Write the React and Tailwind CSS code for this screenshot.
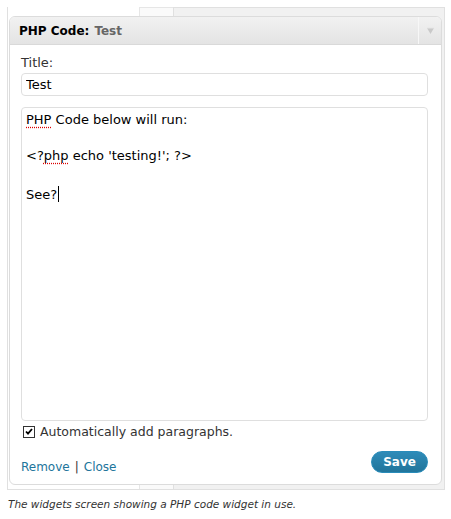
import React, { useState } from "react";

function PhpCodeWidget() {
  const [title, setTitle] = useState("Test");
  const [autoP, setAutoP] = useState(true);

  return (
    <div className="col-start-1 row-start-1 mt-[9px] ml-[2px] mr-[3px] mb-[5px] flex flex-col rounded-[6px] border border-[#dcdcdc] bg-white overflow-hidden">
      {/* header */}
      <div className="flex h-[28px] shrink-0 items-stretch border-b border-[#d9d9d9] bg-gradient-to-b from-[#f1f1f1] to-[#e4e4e4]">
        <div className="flex flex-1 items-center pl-[9px] text-[12px] font-bold text-black">
          PHP Code:
          <span className="ml-[5px] text-[#666]">Test</span>
        </div>
        <div className="flex w-[23px] items-center justify-center border-l border-[#f7f7f7]">
          <svg width="9" height="10" viewBox="0 0 9 10">
            <path d="M1 2h7L4.5 8z" fill="#c9c9c9" />
            <path d="M1 2h7" stroke="#e6e6e6" strokeWidth="1" />
          </svg>
        </div>
      </div>

      {/* body */}
      <div className="flex flex-1 flex-col pl-[11px] pr-[13px] pt-[10px] text-[13px]">
        <label className="leading-[16px] text-[#333]">Title:</label>
        <input
          type="text"
          value={title}
          onChange={(e) => setTitle(e.target.value)}
          className="mt-[2px] h-[23px] w-full rounded-[4px] border border-[#dfdfdf] px-[4px] text-black outline-none"
        />

        <div className="mt-[11px] h-[314px] w-full rounded-[4px] border border-[#dfdfdf] px-[4px] pt-[3px] leading-[18px] text-black">
          <p>
            <span className="underline decoration-dotted decoration-[#d00] underline-offset-[3px]">PHP</span> Code below will run:
          </p>
          <p>&nbsp;</p>
          <p>
            &lt;?<span className="underline decoration-dotted decoration-[#d00] underline-offset-[3px]">php</span> echo 'testing!'; ?&gt;
          </p>
          <p>&nbsp;</p>
          <p>
            See?<span className="ml-[1px] inline-block h-[16px] w-px translate-y-[3px] bg-black" />
          </p>
        </div>

        <label className="mt-[2px] flex h-[18px] items-center text-[12.5px] text-[#333]">
          <input
            type="checkbox"
            checked={autoP}
            onChange={(e) => setAutoP(e.target.checked)}
            className="sr-only"
          />
          <span className="ml-[2px] mr-[5px] flex h-[12px] w-[12px] items-center justify-center border border-[#333] bg-white">
            {autoP && (
              <svg width="8" height="8" viewBox="0 0 8 8">
                <path d="M1 3.5l2 2.2L7 1" stroke="#000" strokeWidth="1.8" fill="none" />
              </svg>
            )}
          </span>
          Automatically add paragraphs.
        </label>

        <div className="mt-[10px] flex items-start justify-between">
          <div className="flex items-center pt-[7px] text-[12px] text-[#21759b]">
            <a href="#" className="hover:text-[#d54e21]">Remove</a>
            <span className="mx-[5px] text-[#333]">|</span>
            <a href="#" className="hover:text-[#d54e21]">Close</a>
          </div>
          <button className="h-[22px] w-[57px] rounded-full border border-[#298cba] bg-gradient-to-b from-[#2e8bb8] to-[#21759b] text-[12px] font-bold text-white">
            Save
          </button>
        </div>
      </div>
    </div>
  );
}

export default function App() {
  return (
    <div
      className="h-[519px] w-[451px] bg-white pl-[7px] pt-[7px]"
      style={{ fontFamily: '"DejaVu Sans", Verdana, sans-serif' }}
    >
      <div className="grid h-[483px] w-[438px]">
        {/* background columns behind the widget */}
        <div className="col-start-1 row-start-1 flex border-b border-[#e0e0e0]">
          <div className="w-[132px] border-l border-[#e0e0e0] bg-white" />
          <div className="w-[34px] border-l border-t border-[#e6e6e6] bg-[#fafafa]" />
          <div className="flex-1 border-l border-t border-r border-[#e0e0e0] bg-[#f1f1f1]" />
        </div>
        <PhpCodeWidget />
      </div>

      <p className="mt-[7px] pl-[1px] text-[10.5px] italic text-[#333]">
        The widgets screen showing a PHP code widget in use.
      </p>
    </div>
  );
}
